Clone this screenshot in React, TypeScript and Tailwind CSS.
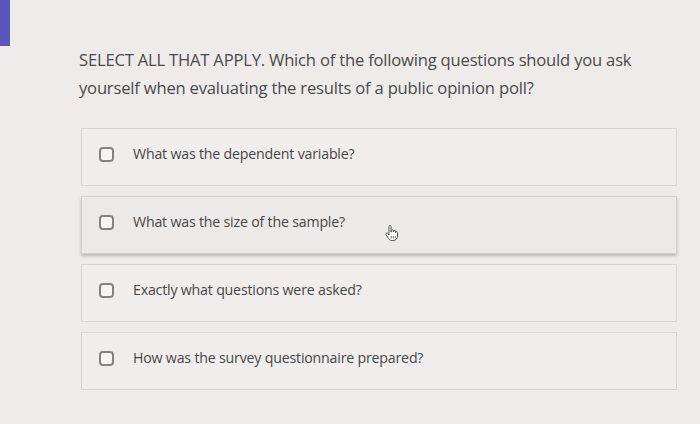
import { useState } from 'react';

const OPTIONS = [
    'What was the dependent variable?',
    'What was the size of the sample?',
    'Exactly what questions were asked?',
    'How was the survey questionnaire prepared?',
];

export default function App() {
    const [checked, setChecked] = useState<boolean[]>([false, false, false, false]);
    const hovered = 1;

    return (
        <div
            className="relative w-[700px] h-[424px] overflow-hidden bg-[#eeecea] text-[#4a4a4a]"
            style={{ fontFamily: '"Open Sans", "Liberation Sans", sans-serif' }}
        >
            {/* Left accent bar */}
            <div className="absolute left-0 top-0 w-[10px] h-[46px] bg-[#5a55be]" />

            <div className="pl-[79px] pr-[19px] pt-[46px]">
                <p className="max-w-[580px] text-[16.6px] leading-[28px] tracking-[-0.2px] text-[#4a4a4a]">
                    SELECT ALL THAT APPLY. Which of the following questions should you ask yourself when evaluating the results of a public opinion poll?
                </p>

                <div className="mt-[26px] flex flex-col gap-[10px] pl-[2px] pr-[4px]">
                    {OPTIONS.map((label, i) => (
                        <label
                            key={label}
                            className={
                                'relative flex items-center h-[58px] pl-[17px] pb-[6px] border cursor-pointer ' +
                                (i === hovered
                                    ? 'bg-[#eceae8] border-[#d3d1cf] shadow-[0_2px_3px_rgba(0,0,0,0.22)]'
                                    : 'bg-[#f0eeec] border-[#d8d6d4]')
                            }
                        >
                            <input
                                type="checkbox"
                                className="sr-only"
                                checked={checked[i]}
                                onChange={() => setChecked(checked.map((c, j) => (j === i ? !c : c)))}
                            />
                            <span className="w-[15px] h-[15px] rounded-[4px] border-2 border-[#858381] bg-[#f6f5f4] shrink-0" />
                            <span className="ml-[19px] text-[14.2px] text-[#474747] tracking-[-0.2px]">{label}</span>

                            {/* Pointer cursor over the hovered option */}
                            {i === hovered && (
                                <svg
                                    className="absolute left-[303px] top-[28px]"
                                    width="14"
                                    height="16"
                                    viewBox="0 0 14 16"
                                    fill="#ffffff"
                                    stroke="#555"
                                    strokeWidth="1"
                                    strokeLinejoin="round"
                                >
                                    <path d="M4 1.5c0-.6.4-1 1-1s1 .4 1 1V7h.3V5.7c0-.6.4-1 1-1s1 .4 1 1V7h.2V6.3c0-.6.4-1 1-1s1 .4 1 1V7.5h.1c0-.6.4-.9.9-.9s1 .4 1 1V11c0 2.4-1.6 4.5-4.3 4.5H7c-1.7 0-2.7-.8-3.6-2.1L1 9.6c-.4-.6-.2-1.2.3-1.5.5-.3 1.1-.2 1.5.3L4 10V1.5z" />
                                    <path d="M6.3 11v2.5M8.3 11v2.5M10.3 11v2.5" fill="none" strokeWidth="0.8" />
                                </svg>
                            )}
                        </label>
                    ))}
                </div>
            </div>
        </div>
    );
}
